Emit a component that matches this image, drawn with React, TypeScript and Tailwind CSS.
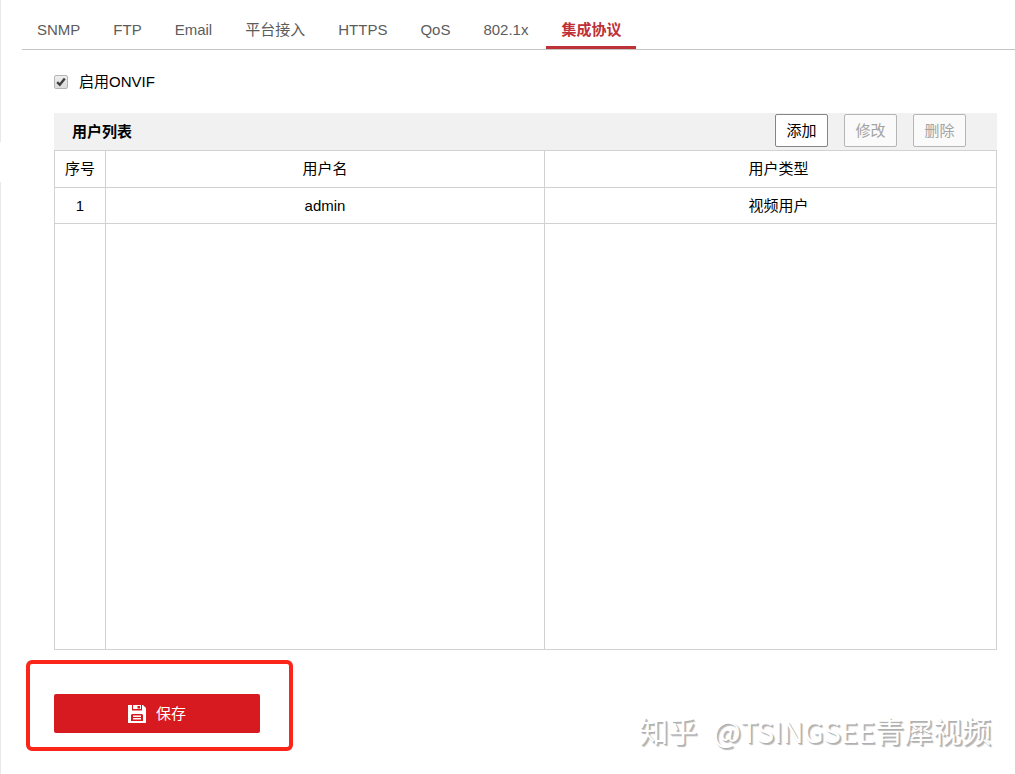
import { useState } from 'react';

interface User {
  id: number;
  name: string;
  type: string;
}

const tabs = ['SNMP', 'FTP', 'Email', '平台接入', 'HTTPS', 'QoS', '802.1x', '集成协议'];

const users: User[] = [{ id: 1, name: 'admin', type: '视频用户' }];

function SaveIcon() {
  return (
    <svg width="18" height="18" viewBox="0 0 18 18" aria-hidden="true">
      <path fill="#fff" d="M0 0H15L18 3V18H0Z" />
      <path fill="#d71920" d="M4 0H5V4H13V0H14V5.5H4ZM9.5 1H12V3.5H9.5Z" />
      <path fill="#d71920" d="M4 9H14L15 10V16H3V10Z" />
      <path fill="#fff" d="M5 10.5H13V12H5ZM5 13H13V14.5H5Z" />
    </svg>
  );
}

function Tabs() {
  const [active, setActive] = useState('集成协议');

  return (
    <nav className="flex h-[50px] gap-[3px] border-b border-[#c4c4c4]">
      {tabs.map(tab => (
        <button
          key={tab}
          type="button"
          onClick={() => setActive(tab)}
          className={
            tab === active
              ? 'border-b-3 border-[#bd3137] px-[15px] pt-[14px] font-bold whitespace-nowrap text-[#bd3137]'
              : 'border-b-3 border-transparent px-[15px] pt-[14px] whitespace-nowrap text-[#5c5c5c]'
          }
        >
          {tab}
        </button>
      ))}
    </nav>
  );
}

function UserTable() {
  return (
    <table className="w-full table-fixed border-separate border-spacing-0 border-t border-l border-[#d2d2d2] text-center">
      <colgroup>
        <col className="w-[51px]" />
        <col className="w-[46.6%]" />
        <col />
      </colgroup>
      <thead>
        <tr className="h-[37px]">
          <th className="border-r border-b border-[#d2d2d2] font-normal">序号</th>
          <th className="border-r border-b border-[#d2d2d2] font-normal">用户名</th>
          <th className="border-r border-b border-[#d2d2d2] pl-4 font-normal">用户类型</th>
        </tr>
      </thead>
      <tbody>
        {users.map(user => (
          <tr key={user.id} className="h-9">
            <td className="border-r border-b border-[#d2d2d2]">{user.id}</td>
            <td className="border-r border-b border-[#d2d2d2]">{user.name}</td>
            <td className="border-r border-b border-[#d2d2d2] pl-4">{user.type}</td>
          </tr>
        ))}
        {/* Empty space below the last user */}
        <tr className="h-[426px]">
          <td className="border-r border-b border-[#d2d2d2]" />
          <td className="border-r border-b border-[#d2d2d2]" />
          <td className="border-r border-b border-[#d2d2d2]" />
        </tr>
      </tbody>
    </table>
  );
}

export default function App() {
  const [enabled, setEnabled] = useState(true);

  return (
    <div className="flex min-h-screen bg-white font-['Liberation_Sans','Noto_Sans_CJK_SC',sans-serif] text-[15px] leading-5 text-black">
      {/* Edge of the side menu, open beside the current item */}
      <div className="flex w-px shrink-0 flex-col gap-10">
        <div className="h-[142px] bg-[#e8e8e8]" />
        <div className="grow bg-[#e8e8e8]" />
      </div>

      <main className="min-w-0 grow pl-[21px]">
        <Tabs />

        <section className="pr-[18px] pl-8">
          <div className="flex h-[63px] items-center gap-[11px]">
            <span className="grid size-[14px]">
              <input
                id="onvif"
                type="checkbox"
                checked={enabled}
                onChange={e => setEnabled(e.target.checked)}
                className="col-start-1 row-start-1 size-[14px] appearance-none rounded-xs border border-[#b4b4b4] bg-linear-to-b from-[#eeeeee] to-[#dcdcdc]"
              />
              {enabled && (
                <svg
                  width="14"
                  height="14"
                  viewBox="0 0 14 14"
                  fill="none"
                  aria-hidden="true"
                  className="pointer-events-none col-start-1 row-start-1"
                >
                  <path d="M3.2 7.2L5.8 9.8L10.8 3.6" stroke="#3f3f3f" strokeWidth="2.4" />
                </svg>
              )}
            </span>
            <label htmlFor="onvif">启用ONVIF</label>
          </div>

          <div className="flex h-[37px] items-start justify-between bg-[#f1f1f1] pt-px pr-[31px] pl-[18px]">
            <h2 className="leading-9 font-bold">用户列表</h2>
            <div className="flex gap-4">
              <button type="button" className="h-[33px] w-[53px] rounded-xs border border-[#858585] bg-white">
                添加
              </button>
              <button type="button" disabled className="h-[33px] w-[53px] rounded-xs border border-[#b5b5b5] bg-[#fafafa] text-[#a3a3a3]">
                修改
              </button>
              <button type="button" disabled className="h-[33px] w-[53px] rounded-xs border border-[#b5b5b5] bg-[#fafafa] text-[#a3a3a3]">
                删除
              </button>
            </div>
          </div>

          <UserTable />
        </section>

        <footer className="flex items-start justify-between pt-[10px] pr-6 pl-1">
          <div className="rounded-md border-4 border-[#fb2519] pt-[30px] pr-[29px] pb-[14px] pl-6">
            <button
              type="button"
              className="flex h-[39px] w-[206px] items-center justify-center gap-[10px] rounded-xs bg-[#d71920] text-white"
            >
              <SaveIcon />
              保存
            </button>
          </div>
          <p className="flex gap-4 pt-[50px] font-['Noto_Sans_CJK_SC',sans-serif] text-[29px] leading-10 whitespace-nowrap text-white text-shadow-[1px_1px_0px_#b0b0b0,2px_2px_1px_#b8b8b8]">
            <span>知乎</span>
            <span>@TSINGSEE青犀视频</span>
          </p>
        </footer>
      </main>
    </div>
  );
}
